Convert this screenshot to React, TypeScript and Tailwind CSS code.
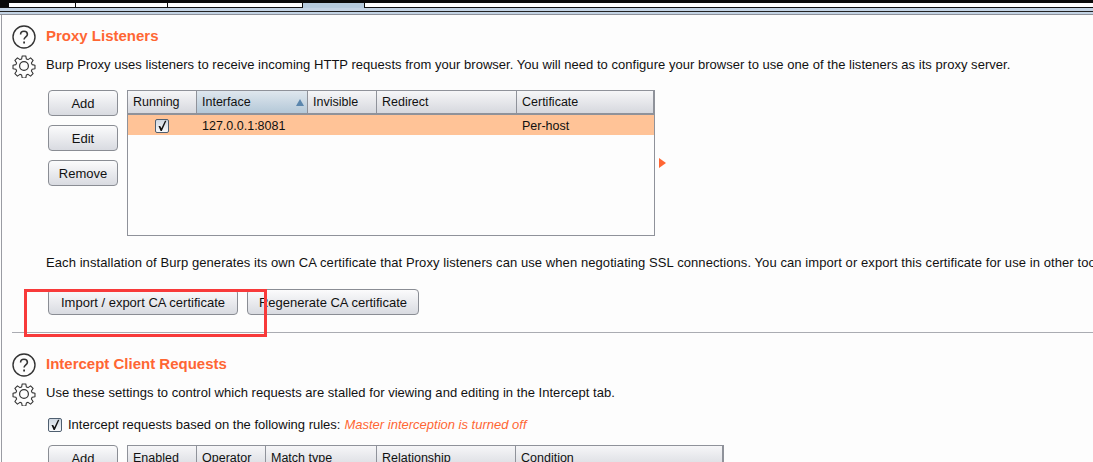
const HelpIcon = () => (
  <svg width="24" height="24" viewBox="0 0 24 24" fill="none" stroke="#333" className="shrink-0">
    <circle cx="12" cy="12" r="11" strokeWidth="1.4" />
    <path d="M8.6 9.4c0-2 1.5-3.2 3.4-3.2s3.4 1.2 3.4 3c0 2.6-3.3 2.6-3.3 5.4" strokeWidth="1.6" />
    <path d="M12.1 16.4v2.2" strokeWidth="1.8" />
  </svg>
);

const GearIcon = () => (
  <svg width="24" height="24" viewBox="0 0 24 24" fill="none" stroke="#333" strokeWidth="1.2" strokeLinejoin="round" className="shrink-0">
    <circle cx="12" cy="12" r="4.4" />
    <path d="M10 .8h4l.6 3.3 1.9.8 2.8-1.9 2.8 2.8-1.9 2.8.8 1.9 3.2.6v4l-3.2.6-.8 1.9 1.9 2.8-2.8 2.8-2.8-1.9-1.9.8-.6 3.2h-4l-.6-3.2-1.9-.8-2.8 1.9-2.8-2.8 1.9-2.8-.8-1.9-3.2-.6v-4l3.2-.6.8-1.9-1.9-2.8 2.8-2.8 2.8 1.9 1.9-.8z" transform="translate(1.2 1.2) scale(.9)" />
  </svg>
);

const Btn = ({ label, className }: { label: string; className: string }) => (
  <button className={`h-[26px] shrink-0 rounded-[4px] border border-[#8a8d94] bg-gradient-to-b from-[#fbfbfc] to-[#d9dbe1] pt-[1px] text-[13px] text-[#111] ${className}`}>
    {label}
  </button>
);

const Box = () => (
  <span className="flex h-[14px] w-[14px] items-center justify-center rounded-[2px] border border-[#4f5f70] bg-gradient-to-b from-[#cfd8e2] to-[#f8f9fb]">
    <svg width="12" height="12" viewBox="0 0 12 12">
      <path d="M2.5 6 L4.2 6 L5.4 8.2 L9 .8 L10.4 .8 L5.8 11 L4.6 11 Z" fill="#111" />
    </svg>
  </span>
);

const HeadCell = ({ label, width, sorted }: { label: string; width: string; sorted?: boolean }) => (
  <div className={`relative flex h-full items-center border-r border-[#8f929a] pt-[1px] pl-[5px] ${width} ${sorted ? 'bg-gradient-to-b from-[#dfe7ee] to-[#b4c8d8]' : 'bg-gradient-to-b from-[#f6f6f8] to-[#d6d8de]'}`}>
    {label}
    {sorted && <span className="absolute right-[3px] top-[8px] h-0 w-0 border-x-[4px] border-b-[7px] border-x-transparent border-b-[#5b86ad]" />}
  </div>
);

const Section = ({ title, desc }: { title: string; desc: string }) => (
  <div className="flex gap-[10px]">
    <div className="flex w-[24px] flex-col gap-[5px]">
      <HelpIcon />
      <GearIcon />
    </div>
    <div className="flex flex-col">
      <h2 className="mt-[2px] h-[18px] text-[15px] leading-[18px] font-bold text-[#ff6633]">{title}</h2>
      <p className="mt-[12px] h-[16px] text-[13px] leading-[16px] tracking-[0.03px] whitespace-nowrap">{desc}</p>
    </div>
  </div>
);

export default function App() {
  return (
    <div className="relative h-[462px] w-[1093px] overflow-hidden bg-[#fdfdfd] font-['Liberation_Sans',Arial,sans-serif] text-[#111]">
      {/* tab strip */}
      <div className="h-[3px] bg-[#0a0a0a]" />
      <div className="flex h-[4px]">
        <div className="h-full w-[9px] bg-[#0a0a0a]" />
        <div className="h-full w-[67px] border-r border-[#0a0a0a] bg-white" />
        <div className="h-full w-[92px] border-r border-[#0a0a0a] bg-white" />
        <div className="h-full w-[135px] border-r border-[#0a0a0a] bg-white" />
        <div className="h-full w-[61px] bg-[#b5cadc]" />
        <div className="h-full flex-1 border-l border-[#0a0a0a] bg-white" />
      </div>
      <div className="flex h-[1px] bg-[#111]">
        <div className="ml-[303px] h-full w-[61px] bg-[#b5cadc]" />
      </div>
      <div className="h-[3px] bg-[#c3d3e4]" />
      <div className="h-[1px] bg-[#222]" />
      <div className="h-[2px] bg-[#c3d3e4]" />
      <div className="h-[1px] bg-[#8d9098]" />

      <div className="ml-[1px] h-full border-l border-[#9a9ca3] pl-[10px]">
        <div className="pt-[10px]">
          <Section
            title="Proxy Listeners"
            desc="Burp Proxy uses listeners to receive incoming HTTP requests from your browser. You will need to configure your browser to use one of the listeners as its proxy server."
          />
        </div>

        <div className="mt-[12px] ml-[36px] flex">
          <div className="flex w-[79px] flex-col gap-[9px]">
            <Btn label="Add" className="w-[70px]" />
            <Btn label="Edit" className="w-[70px]" />
            <Btn label="Remove" className="w-[70px]" />
          </div>
          <div className="h-[146px] w-[528px] border border-[#8f929a] bg-[#fdfdfd] text-[12.5px]">
            <div className="flex h-[24px] border-b-2 border-[#8f929a]">
              <HeadCell label="Running" width="w-[69px]" />
              <HeadCell label="Interface" width="w-[111px]" sorted />
              <HeadCell label="Invisible" width="w-[69px]" />
              <HeadCell label="Redirect" width="w-[140px]" />
              <HeadCell label="Certificate" width="flex-1" />
            </div>
            <div className="flex h-[20px] items-center bg-[#ffc397]">
              <div className="mt-[1px] flex w-[68px] justify-center"><Box /></div>
              <div className="mt-[2px] w-[112px] pl-[6px]">127.0.0.1:8081</div>
              <div className="w-[69px]" />
              <div className="w-[140px]" />
              <div className="mt-[2px] pl-[5px]">Per-host</div>
            </div>
          </div>
          <span className="mt-[68px] ml-[4px] h-0 w-0 border-y-[5px] border-l-[7px] border-y-transparent border-l-[#ff6633]" />
        </div>

        <p className="mt-[19px] ml-[34px] h-[16px] text-[13px] leading-[16px] tracking-[0.08px] whitespace-nowrap">
          Each installation of Burp generates its own CA certificate that Proxy listeners can use when negotiating SSL connections. You can import or export this certificate for use in other tools or another installation of Burp.
        </p>

        <div className="mt-[18px] ml-[36px] flex gap-[9px]">
          <Btn label="Import / export CA certificate" className="w-[190px]" />
          <Btn label="Regenerate CA certificate" className="w-[172px]" />
        </div>

        <div className="mt-[17px] h-[1px] bg-[#aaacb2]" />

        <div className="pt-[20px]">
          <Section
            title="Intercept Client Requests"
            desc="Use these settings to control which requests are stalled for viewing and editing in the Intercept tab."
          />
        </div>

        <div className="mt-[10px] ml-[36px] flex h-[18px] items-center gap-[6px] text-[13px]">
          <Box />
          <span>Intercept requests based on the following rules:</span>
          <span className="ml-[-2px] text-[#ff6633] italic">Master interception is turned off</span>
        </div>

        <div className="mt-[11px] ml-[36px] flex">
          <div className="w-[79px]">
            <Btn label="Add" className="w-[70px]" />
          </div>
          <div className="h-[60px] w-[597px] border border-[#8f929a] text-[12.5px]">
            <div className="flex h-[24px]">
              <HeadCell label="Enabled" width="w-[69px]" />
              <HeadCell label="Operator" width="w-[69px]" />
              <HeadCell label="Match type" width="w-[111px]" />
              <HeadCell label="Relationship" width="w-[139px]" />
              <HeadCell label="Condition" width="flex-1" />
            </div>
          </div>
        </div>
      </div>

      {/* red annotation drawn over the screenshot */}
      <div className="absolute top-[289px] left-[24px] h-[48px] w-[243px] border-[3px] border-[#f83a3a]" />
    </div>
  );
}
